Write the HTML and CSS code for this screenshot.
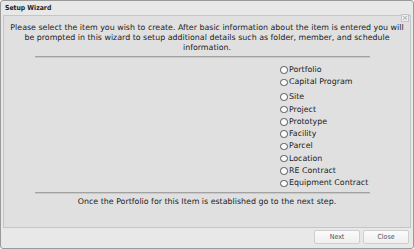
FILE: index.html
```html
<!DOCTYPE html>
<html>
<head>
<meta charset="utf-8">
<link rel="stylesheet" href="styles.css">
</head>
<body>
<div class="dialog">
  <div class="titlebar">Setup Wizard</div>
  <span class="close-box">×</span>
  <div class="panel">
    <p class="intro">Please select the item you wish to create. After basic information about the item is entered you will be prompted in this wizard to setup additional details such as folder, member, and schedule information.</p>
    <div class="rule"></div>
    <ul class="options">
      <li class="opt"><span class="radio"></span>Portfolio</li>
      <li class="opt opt-gap"><span class="radio"></span>Capital Program</li>
      <li class="opt"><span class="radio"></span>Site</li>
      <li class="opt"><span class="radio"></span>Project</li>
      <li class="opt"><span class="radio"></span>Prototype</li>
      <li class="opt"><span class="radio"></span>Facility</li>
      <li class="opt"><span class="radio"></span>Parcel</li>
      <li class="opt"><span class="radio"></span>Location</li>
      <li class="opt"><span class="radio"></span>RE Contract</li>
      <li class="opt"><span class="radio"></span>Equipment Contract</li>
    </ul>
    <div class="rule rule-bottom"></div>
    <p class="note">Once the Portfolio for this Item is established go to the next step.</p>
  </div>
  <div class="footer">
    <button class="btn">Next</button>
    <button class="btn">Close</button>
  </div>
</div>
</body>
</html>
```
FILE: styles.css
```css
html, body {
  margin: 0;
  padding: 0;
  background: #ffffff;
}
body {
  font-family: "DejaVu Sans", sans-serif;
  color: #222;
}
.dialog {
  position: relative;
  box-sizing: border-box;
  width: 414px;
  height: 249px;
  border: 1px solid #9a9a9a;
  border-radius: 3px;
  background: #e8e8e8;
  display: flex;
  flex-direction: column;
}
.titlebar {
  height: 14px;
  line-height: 15px;
  padding-left: 4px;
  font-family: "DejaVu Sans Condensed", "DejaVu Sans", sans-serif;
  font-stretch: condensed;
  font-size: 6.8px;
  font-weight: bold;
  color: #222;
}
.close-box {
  position: absolute;
  top: 13px;
  right: 4px;
  width: 6px;
  height: 6px;
  border: 1px solid #c4c4c4;
  background: #ececec;
  color: #999;
  font-size: 7px;
  line-height: 6px;
  text-align: center;
}
.panel {
  margin: 0 2px 0 2px;
  height: 213px;
  box-sizing: border-box;
  border: 1px solid #c6c6c6;
  background: #e0e0e0;
  display: flex;
  flex-direction: column;
  align-items: flex-start;
}
.intro {
  margin: 7px 0 0 0;
  padding: 0 4px;
  font-size: 7.9px;
  line-height: 10px;
  text-align: center;
  align-self: stretch;
}
.rule {
  margin: 3px 0 0 31px;
  width: 335px;
  height: 1px;
  border-top: 1px solid #a2a2a2;
  background: #c9c9c9;
}
.options {
  list-style: none;
  margin: 6px 0 0 276px;
  padding: 0;
  font-size: 7.9px;
}
.opt {
  height: 12.3px;
  line-height: 12px;
  display: flex;
  align-items: center;
  white-space: nowrap;
}
.opt-gap {
  margin-bottom: 2.5px;
}
.radio {
  width: 5.5px;
  height: 5.5px;
  border: 1px solid #555;
  border-radius: 50%;
  background: #fafafa;
  margin-right: 1.5px;
  flex: none;
}
.rule-bottom {
  margin-top: 3px;
}
.note {
  margin: 3px 0 0 0;
  font-size: 7.9px;
  line-height: 10px;
  text-align: center;
  align-self: stretch;
}
.footer {
  flex: 1;
  display: flex;
  justify-content: flex-end;
  align-items: flex-start;
  gap: 3px;
  padding: 2px 4px 0 0;
}
.btn {
  width: 46px;
  height: 14px;
  padding: 0;
  border: 1px solid #cfcfcf;
  border-radius: 2px;
  background: linear-gradient(#fbfbfb, #efefef);
  font-family: "DejaVu Sans Condensed", "DejaVu Sans", sans-serif;
  font-stretch: condensed;
  font-size: 7px;
  color: #555;
}
```
